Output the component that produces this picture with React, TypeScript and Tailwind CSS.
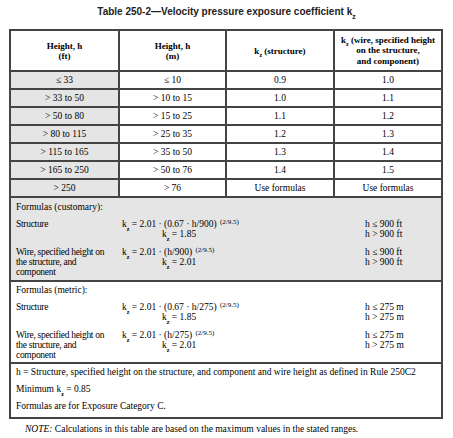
import type { ReactNode } from 'react';

const rows = [
  ['≤ 33', '≤ 10', '0.9', '1.0'],
  ['> 33 to 50', '> 10 to 15', '1.0', '1.1'],
  ['> 50 to 80', '> 15 to 25', '1.1', '1.2'],
  ['> 80 to 115', '> 25 to 35', '1.2', '1.3'],
  ['> 115 to 165', '> 35 to 50', '1.3', '1.4'],
  ['> 165 to 250', '> 50 to 76', '1.4', '1.5'],
  ['> 250', '> 76', 'Use formulas', 'Use formulas'],
];

function Kz() {
  return (
    <span>
      k<sub className="text-[6px] font-bold align-[-2px]">z</sub>
    </span>
  );
}

function Sup({ children }: { children: ReactNode }) {
  return <span className="text-[7px] leading-none relative -top-[3px] ml-[1px]">{children}</span>;
}

function FormulaSection({
  title,
  div,
  unit,
  grey,
}: {
  title: string;
  div: string;
  unit: string;
  grey?: boolean;
}) {
  return (
    <div className={`border-b-2 border-[#444] px-[5px] ${grey ? 'bg-[#e5e5e5] pt-[4px] pb-[3px]' : 'pt-[3px] pb-[2px]'}`}>
      <div className="h-[10px]">{title}</div>
      <div className="grid grid-cols-[106px_243px_1fr] mt-[7px]">
        <div className="tracking-[-0.3px]">Structure</div>
        <div>
          <div className="h-[10px] whitespace-nowrap">
            <Kz /> = 2.01 · (0.67 · h/{div}) <Sup>(2/9.5)</Sup>
          </div>
          <div className="h-[10px] pl-[40px]">
            <Kz /> = 1.85
          </div>
        </div>
        <div>
          <div className="h-[10px]">h ≤ {div} {unit}</div>
          <div className="h-[10px]">h &gt; {div} {unit}</div>
        </div>
      </div>
      <div className="grid grid-cols-[106px_243px_1fr] mt-[8px]">
        <div className="tracking-[-0.3px]">
          <div className="h-[10px] whitespace-nowrap">Wire, specified height on</div>
          <div className="h-[10px]">the structure, and</div>
          <div className="h-[10px]">component</div>
        </div>
        <div>
          <div className="h-[10px] whitespace-nowrap">
            <Kz /> = 2.01 · (h/{div}) <Sup>(2/9.5)</Sup>
          </div>
          <div className="h-[10px] pl-[40px]">
            <Kz /> = 2.01
          </div>
        </div>
        <div>
          <div className="h-[10px]">h ≤ {div} {unit}</div>
          <div className="h-[10px]">h &gt; {div} {unit}</div>
        </div>
      </div>
    </div>
  );
}

export default function App() {
  return (
    <div className="w-[453px] h-[438px] bg-white text-black font-['Liberation_Serif',serif] text-[9.5px] leading-[10px] overflow-hidden">
      <div className="pt-[6px] h-[29px] text-center font-['Liberation_Sans',Arial,sans-serif] font-bold text-[10px] leading-[12px] text-[#222]">
        Table 250-2—Velocity pressure exposure coefficient k
        <sub className="text-[7px] align-[-2px]">z</sub>
      </div>

      <div className="ml-[9px] w-[434px] border-x-2 border-t-2 border-[#444]">
        <div className="grid grid-cols-[109px_107px_108px_106px] border-b-2 border-[#444] h-[41px] font-bold text-center text-[9px]">
          <div className="border-r-2 border-[#444] flex flex-col justify-center">
            <div>Height, h</div>
            <div>(ft)</div>
          </div>
          <div className="border-r-2 border-[#444] flex flex-col justify-center">
            <div>Height, h</div>
            <div>(m)</div>
          </div>
          <div className="border-r-2 border-[#444] flex flex-col justify-center">
            <div>
              <Kz /> (structure)
            </div>
          </div>
          <div className="flex flex-col justify-center leading-[10.5px]">
            <div>
              <Kz /> (wire, specified height
            </div>
            <div>on the structure,</div>
            <div>and component)</div>
          </div>
        </div>

        {rows.map((r, i) => (
          <div
            key={i}
            className="grid grid-cols-[109px_107px_108px_106px] border-b-2 border-[#444] h-[18px] text-center"
          >
            <div className="border-r-2 border-[#444] bg-[#e5e5e5] flex items-center justify-center">{r[0]}</div>
            <div className="border-r-2 border-[#444] flex items-center justify-center">{r[1]}</div>
            <div className="border-r-2 border-[#444] flex items-center justify-center">{r[2]}</div>
            <div className="flex items-center justify-center">{r[3]}</div>
          </div>
        ))}

        <FormulaSection title="Formulas (customary):" div="900" unit="ft" grey />
        <FormulaSection title="Formulas (metric):" div="275" unit="m" />

        <div className="border-b-2 border-[#444] px-[5px] pt-[3px] pb-[6px]">
          <div className="h-[10px] whitespace-nowrap">
            h = Structure, specified height on the structure, and component and wire height as defined in Rule 250C2
          </div>
          <div className="h-[10px] mt-[7px]">
            Minimum <Kz /> = 0.85
          </div>
          <div className="h-[10px] mt-[7px]">Formulas are for Exposure Category C.</div>
        </div>
      </div>

      <div className="pl-[25px] mt-[5px] whitespace-nowrap">
        <span className="italic">NOTE:</span> Calculations in this table are based on the maximum values in the stated ranges.
      </div>
    </div>
  );
}
